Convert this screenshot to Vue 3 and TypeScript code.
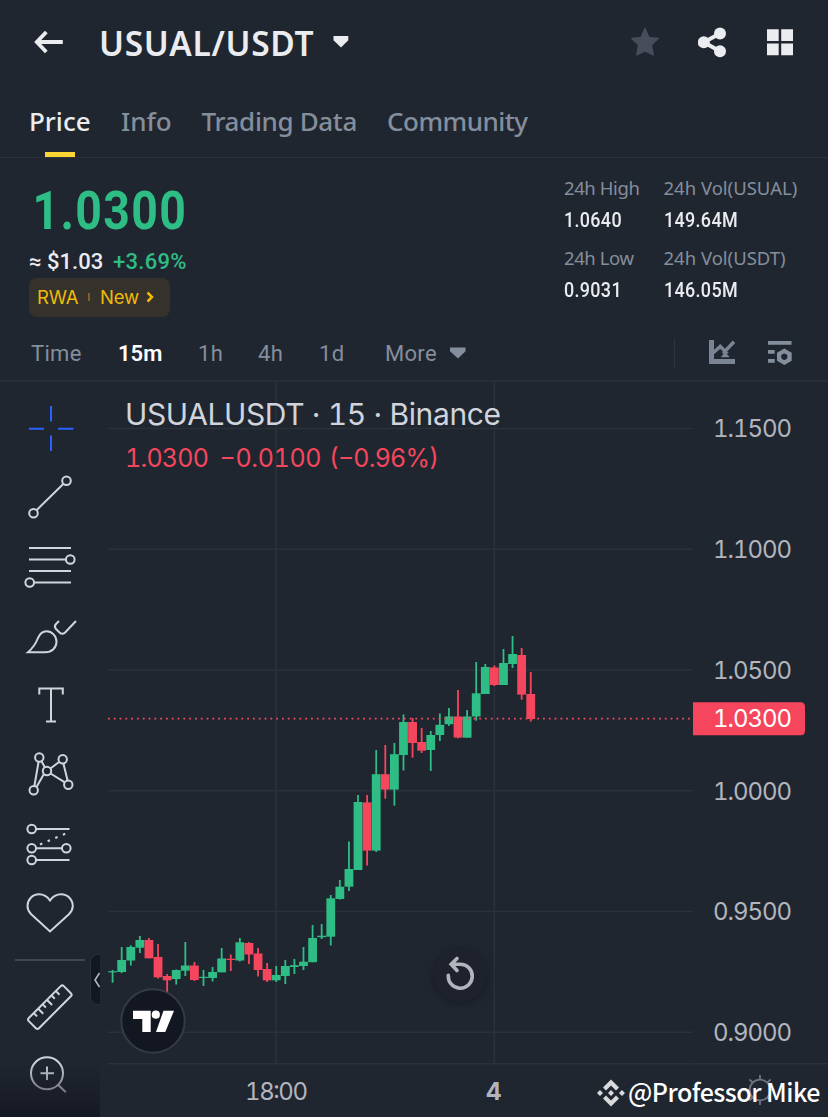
<script setup lang="ts">
interface Tick { y: number; label: string }
type Candle = [number, number, number, number, 'up' | 'down']

const tabs = ['Price', 'Info', 'Trading Data', 'Community']
const intervals = ['Time', '15m', '1h', '4h', '1d', 'More']
const stats = [
  { label: '24h High', value: '1.0640' },
  { label: '24h Vol(USUAL)', value: '149.64M' },
  { label: '24h Low', value: '0.9031' },
  { label: '24h Vol(USDT)', value: '146.05M' },
]
const ticks: Tick[] = [
  { y: 428.5, label: '1.1500' },
  { y: 549.3, label: '1.1000' },
  { y: 670, label: '1.0500' },
  { y: 790.8, label: '1.0000' },
  { y: 911.5, label: '0.9500' },
  { y: 1032.3, label: '0.9000' },
]
// high, body top, body bottom, low
const candles: Candle[] = [
  [970, 971.2, 972.4, 982.7, 'up'], [947, 960, 972, 973, 'up'], [945.3, 947, 960.5, 965.5, 'up'],
  [936, 940, 947.7, 953, 'up'], [938, 940, 958.3, 958.3, 'down'], [944, 957, 977.3, 978.5, 'down'],
  [974, 976, 980.3, 993.5, 'down'], [969.5, 970, 979, 984.5, 'up'], [942, 965.5, 970.7, 976, 'up'],
  [962, 965.5, 980, 981, 'down'], [970, 976.8, 978, 986, 'up'], [967, 972, 978, 981.5, 'up'],
  [948, 958.5, 972.3, 972.3, 'up'], [954.5, 958.8, 960, 971, 'down'], [938, 942.3, 960.5, 961.5, 'up'],
  [942, 943, 954.5, 964, 'down'], [948, 953.5, 970, 976.5, 'down'], [963, 969, 980.3, 982, 'down'],
  [966, 975, 980.3, 982, 'up'], [960, 966, 976, 984, 'up'], [959, 965.2, 967, 974, 'up'],
  [947, 961.7, 966, 970, 'up'], [925, 938, 962.2, 962.2, 'up'], [924, 935.7, 937.2, 939, 'up'],
  [895, 898.3, 936.7, 945.5, 'up'], [880, 886.7, 899, 899.5, 'up'], [841.5, 869, 886.7, 891, 'up'],
  [795, 802, 870, 870, 'up'], [795, 802.4, 850.6, 865.5, 'down'], [750, 774.2, 850.6, 852, 'up'],
  [745, 774.2, 789.6, 798.7, 'down'], [743, 754.2, 789.6, 805.7, 'up'], [714.5, 722, 755, 770.5, 'up'],
  [718, 722, 743, 757.7, 'down'], [728, 742, 750.7, 753, 'down'], [731, 735, 750, 771, 'up'],
  [713.5, 724.8, 735, 741, 'up'], [708, 716.5, 724.2, 726, 'up'], [690, 716.5, 737.6, 738.3, 'down'],
  [710, 716.5, 737.7, 737.7, 'up'], [662, 693.3, 716.5, 720.7, 'up'], [664, 667, 694, 694, 'up'],
  [665.5, 667.5, 685, 686, 'down'], [649, 663, 685, 685, 'up'], [636, 654, 664, 668, 'up'],
  [648, 655, 694.6, 699.7, 'down'], [672, 694, 719, 721.5, 'down'],
]
const cx = (i: number): number => 112.6 + i * 9.09
</script>

<template>
  <div class="screen">
    <header class="topbar">
      <svg class="back" viewBox="0 0 32 30" width="32" height="30"><path d="M29.800 15H5M13.300 5 3.800 15l9.500 10" /></svg>
      <h1>USUAL/USDT</h1>
      <svg class="caret" viewBox="0 0 16 12" width="16" height="12"><path d="M.5 0h14.800v4.200L8 11.400.5 4.200Z" /></svg>
      <div class="actions">
        <svg width="30" height="32" viewBox="0 0 30 32"><path class="star" d="m15 2.500 3.900 9 9.300 1-6.900 6.500 1.900 9.800-8.200-4-8.200 4 1.900-9.800L1.800 12.500l9.300-1Z" /></svg>
        <svg width="30" height="32" viewBox="0 0 30 32"><g fill="#eaecef"><circle cx="22" cy="7.500" r="6" /><circle cx="5.800" cy="16.300" r="6" /><circle cx="22" cy="25.300" r="6" /></g><path d="M22 7.500 5.800 16.300 22 25.300" fill="none" stroke="#eaecef" stroke-width="4" /></svg>
        <svg width="28" height="32" viewBox="0 0 28 32"><path fill="#eaecef" d="M1 3.300h11.700V15H1ZM15.200 3.300H27V15H15.200ZM1 17.600h11.700v11.600H1ZM15.200 17.600H27v11.600H15.200Z" /></svg>
      </div>
    </header>

    <nav class="tabs">
      <span v-for="(t, i) in tabs" :key="t" :class="['tab', 't' + i, { active: i === 0 }]">{{ t }}</span>
    </nav>

    <section class="summary">
      <div class="quote">
        <div class="price">1.0300</div>
        <div class="fiat"><span class="approx">≈ $1.03</span><span class="change">+3.69%</span></div>
        <div class="badge">
          <span class="rwa">RWA</span><i></i><span class="new">New</span>
          <svg width="8" height="12" viewBox="0 0 8 12"><path d="M1.500 1.500 6 6l-4.500 4.500" /></svg>
        </div>
      </div>
      <dl class="stats">
        <div v-for="(s, i) in stats" :key="s.label" :class="'s' + i">
          <dt>{{ s.label }}</dt>
          <dd>{{ s.value }}</dd>
        </div>
      </dl>
    </section>

    <nav class="intervals">
      <span v-for="(t, i) in intervals" :key="t" :class="['i' + i, { active: i === 1 }]">{{ t }}</span>
      <svg class="more" width="16" height="12" viewBox="0 0 16 12"><path d="M0 .5h15.500v3.700L8 11.500 0 4.200Z" /></svg>
      <div class="tools">
        <svg width="28" height="28" viewBox="0 0 28 28"><path d="M3.500 1v21.500H27" fill="none" stroke="#7b8493" stroke-width="5" /><path d="m5 14 7.300-6.500 4.700 4.800 9-9.500" fill="none" stroke="#7b8493" stroke-width="3.500" /><path fill="#7b8493" d="m17.200 10.500-3.500 3.400 2 .8-3 3.500h9l-3-3.500 2-.8Z" /></svg>
        <svg width="28" height="28" viewBox="0 0 28 28"><path fill="#848e9c" d="M2 2h23.500v3.700H2ZM2 11h6.700v3.700H2ZM2 20h6.700v3.700H2Z" /><path fill="#848e9c" fill-rule="evenodd" d="m18.300 9.500 7.400 4.200v8l-7.400 4.200-7.300-4.200v-8ZM18.300 14.500a3.200 3.200 0 1 0 .01 0Z" /></svg>
      </div>
    </nav>

    <main class="workspace">
      <aside class="toolbar">
        <svg class="icon"><path class="blue" d="M51 12v15.500M51 41.500V57M29 34.700h15M58 34.700h15.500" /></svg>
        <svg class="icon"><circle cx="66.500" cy="17.700" r="4.300" /><circle cx="33.500" cy="50.200" r="4.300" /><path d="M63.500 20.700 36.500 47.200" /></svg>
        <svg class="icon"><path d="M29 16h42M29 27.500h37M29 39h42M34 50.500h37" /><circle cx="70.300" cy="27.500" r="4.300" /><circle cx="29.700" cy="50.500" r="4.300" /></svg>
        <svg class="icon"><path d="M28 51.200C33 47 36 42 38 37c2-4.500 5-6.700 8.500-6.700 5.500 0 10 4.700 10 10.500 0 6-4.500 10.400-11.500 10.400ZM59 20l-3 3q-2.300 2.500 0 5l3.500 3.500q2.800 2.600 5.600 0L76 20" /></svg>
        <svg class="icon"><path d="M39.300 24.500v-6h23.500v6M51 18.500v33M46 51.500h10" /></svg>
        <svg class="icon"><path d="m38.600 22.700-4.200 24.300M41.500 22.100l3.300 6.200M43.800 35.200 36.500 48M50.500 29.500 59 23M50.500 34.500l14 8.700M63.400 24.600 67.600 41.400" /><circle cx="39.300" cy="18.500" r="4.200" /><circle cx="62.700" cy="20.300" r="4.200" /><circle cx="47" cy="32" r="4.200" /><circle cx="33.700" cy="51.300" r="4.200" /><circle cx="68.300" cy="45.700" r="4.200" /></svg>
        <svg class="icon"><path d="M36 21h33.500M36 40.300h26M36 52h33.500" /><path d="m40 36.500 27-11.500" stroke-dasharray="2.500 5.800" /><circle cx="31.700" cy="21" r="4.300" /><circle cx="31.700" cy="40.300" r="4.300" /><circle cx="66.300" cy="40.300" r="4.300" /><circle cx="31.700" cy="52" r="4.300" /></svg>
        <svg class="icon"><path d="M50 23.500C47 19 43 17.300 39 17.300c-6.500 0-11.500 5.200-11.500 11.700 0 3.300 1.500 6 3.700 8.200L50 54.500l18.900-17.300c2.200-2.200 3.900-4.900 3.900-8.200 0-6.500-5.200-11.700-11.700-11.700-4 0-8.100 1.700-11.100 6.200Z" /></svg>
        <div class="rule"></div>
        <svg class="icon"><g transform="translate(49.800 34.200) rotate(-45)"><rect x="-24.700" y="-7.200" width="49.500" height="14.400" rx="2.200" /><path d="M-15.500-7v4.500M-9.300-7v7M-3-7v4.500M3.200-7v7M9.500-7v4.500M15.700-7v5" /></g></svg>
        <svg class="icon"><circle cx="47" cy="31.300" r="16" /><path d="M40.500 31.300h13.500M47 24.500v13.500M58.300 43l7.500 7.300" /></svg>
        <div class="fade"></div>
        <div class="handle"><svg width="8" height="16" viewBox="0 0 8 16"><path d="M6.500 1 2 8l4.500 7" /></svg></div>
      </aside>

      <svg class="chart" viewBox="100 381 728 736" width="728" height="736">
        <g stroke="#2b313b" stroke-width="1.600">
          <path v-for="t in ticks" :key="t.label" :d="`M108 ${t.y}H693`" />
          <path d="M276.200 381V1064M494.400 381V1064M108 1063.800H693.500M695 1063.800H828" />
        </g>
        <g v-for="(c, i) in candles" :key="i" :class="c[4]">
          <rect :x="cx(i) - 0.9" :y="c[0]" width="1.800" :height="c[3] - c[0]" />
          <rect :x="cx(i) - 4.4" :y="c[1]" width="8.800" :height="c[2] - c[1]" />
        </g>
        <path d="M108 718.600H693" stroke="#f6465d" stroke-width="1.800" stroke-dasharray="1.800 4" />
        <g class="axis">
          <text v-for="t in ticks" :key="t.label" x="713" :y="t.y + 8.700" textLength="79">{{ t.label }}</text>
          <text x="245" y="1100" textLength="63">18:00</text>
          <text class="day" x="486" y="1100">4</text>
        </g>
        <path d="M693 702.200h107.500q4.500 0 4.500 4.500v24q0 4.500-4.500 4.500H693Z" fill="#f6465d" />
        <text class="last" x="713" y="727.300" textLength="79">1.0300</text>
        <text class="pair" x="125" y="425" textLength="376">USUALUSDT · 15 · Binance</text>
        <g class="delta">
          <text x="125" y="466.500" textLength="84">1.0300</text>
          <text x="219.500" y="466.500" textLength="102">−0.0100</text>
          <text x="329" y="466.500" textLength="110">(−0.96%)</text>
        </g>
        <circle cx="153" cy="1021" r="31.700" fill="#131722" stroke="#363a45" stroke-width="2" />
        <g fill="#fff">
          <path d="M133 1010.700h17.700V1032h-8.400v-13H133ZM163.500 1010.700H174L165.300 1032H156Z" />
          <circle cx="155.800" cy="1014.700" r="4.100" />
        </g>
        <circle class="reset" cx="460.300" cy="974.300" r="27" />
        <path d="M448.300 975.300a12 12 0 1 0 12-11.100H452M457 958.500l-5.800 5.700 5.800 6.300" fill="none" stroke="#b2b5be" stroke-width="3.600" stroke-linecap="round" />
        <g fill="none" stroke="#6f7480" stroke-width="1.800">
          <circle cx="760" cy="1090" r="10.300" />
          <path d="M760 1075v4.500M760 1100.500v4.500M770.500 1079.500l-3 3M749.500 1079.500l3 3M770.500 1100.500l-3-3M749.500 1100.500l3-3M745.500 1090h4M770.500 1090h4" />
        </g>
        <g transform="translate(611 1093)" fill="#d9dadc">
          <path d="M0-13.500 8-5.500 5-2.500 0-7.500-5-2.500-8-5.500ZM0 13.500 8 5.500 5 2.500 0 7.500-5 2.500-8 5.500ZM0-3 3 0 0 3-3 0ZM-11-3-8 0-11 3-14 0ZM11-3 14 0 11 3 8 0Z" />
        </g>
        <text class="credit" x="628" y="1102" textLength="192.500">@Professor Mike</text>
      </svg>
    </main>
  </div>
</template>

<style>
html, body { margin: 0; background: #202630; }
</style>

<style scoped>
.screen { width: 828px; height: 1117px; overflow: hidden; background: #202630; color: #eaecef; font-family: "Noto Sans", sans-serif; box-sizing: border-box; }
.topbar { height: 87px; display: flex; align-items: center; padding: 0 34px 0 33px; box-sizing: border-box; }
.back { margin-top: -3px; fill: none; stroke: #eaecef; stroke-width: 3.800; }
h1 { margin: -2px 0 0 34px; width: 215px; font-size: 33.500px; font-weight: 600; line-height: 44px; letter-spacing: .7px; white-space: nowrap; }
.caret { margin: -4px 0 0 19px; fill: #eaecef; }
.actions { display: flex; gap: 38px; margin: -4px 0 0 auto; }
.star { fill: #474d5b; stroke: #474d5b; stroke-width: 1.500; stroke-linejoin: round; }
.tabs { height: 71px; box-sizing: border-box; border-bottom: 1.500px solid #2c323c; display: grid; grid-template-columns: 92px 80.500px 185.500px auto; padding: 0 0 0 29px; font-size: 26px; font-weight: 500; line-height: 69px; color: #848e9c; white-space: nowrap; }
.tab.active { color: #eaecef; background: linear-gradient(#fcd535, #fcd535) 16px 65px / 30px 5px no-repeat; }
.t2 { letter-spacing: -.350px; }
.t3 { letter-spacing: -.500px; }
.summary { height: 168px; display: flex; justify-content: space-between; box-sizing: border-box; padding: 19px 0 0 29px; white-space: nowrap; }
.price { width: 200px; height: 66px; font: 700 54px/67px Roboto, sans-serif; color: #2ebd85; letter-spacing: 1.600px; padding-left: 4px; transform: scaleX(.86); transform-origin: 0 0; }
.fiat { height: 35px; display: flex; gap: 10px; font: 500 22px/38px Roboto, sans-serif; }
.approx { width: 74px; }
.change { color: #2ebd85; letter-spacing: .300px; }
.badge { display: flex; align-items: center; width: 140.500px; height: 38.500px; border-radius: 8px; background: #34322b; color: #f0b90b; font: 400 18.500px/38px Inter, sans-serif; box-sizing: border-box; padding-left: 8px; }
.rwa { width: 51px; letter-spacing: -.200px; }
.badge i { width: 1.500px; height: 8px; background: #7a6220; margin-right: 10.500px; }
.new { width: 46px; letter-spacing: -.200px; }
.badge svg { fill: none; stroke: #f0b90b; stroke-width: 2.500; }
.stats { margin: 0; width: 264px; display: grid; grid-template-columns: 99.500px auto; grid-auto-rows: 69.500px; }
.stats dt { font-size: 18.500px; line-height: 22px; color: #848e9c; }
.s0 dt, .s2 dt { letter-spacing: -.400px; }
.stats dd { margin: 8px 0 0; font: 500 19.500px/27px Roboto, sans-serif; letter-spacing: .350px; transform: scaleX(.92); transform-origin: 0 0; }
.intervals { height: 56px; box-sizing: border-box; border-bottom: 2px solid #272d37; display: flex; align-items: center; padding-left: 31px; font: 400 22px/52px Roboto, sans-serif; color: #848e9c; letter-spacing: .300px; }
.intervals span { padding-top: 1px; }
.intervals .active { color: #fff; font-weight: 600; letter-spacing: 0; }
.i0 { width: 87px; } .i1 { width: 80px; } .i2 { width: 60px; } .i3 { width: 61px; } .i4 { width: 66px; } .i5 { width: 65px; }
.more { fill: #848e9c; }
.tools { display: flex; align-items: center; gap: 30px; height: 31px; border-left: 1px solid #2f3540; margin-left: auto; padding: 0 34px 0 33px; }
.workspace { display: flex; height: 736px; margin-top: -1px; }
.toolbar { position: relative; width: 100px; height: 736px; box-sizing: border-box; padding-top: 13px; display: flex; flex-direction: column; overflow: hidden; }
.icon { display: block; flex: none; width: 100px; height: 69px; fill: none; stroke: #d1d4dc; stroke-width: 2; }
.blue { stroke: #2962ff; }
.rule { flex: none; width: 70px; height: 2px; margin: 13px 0 12px 15px; background: #434651; }
.fade { position: absolute; left: 0; bottom: 0; width: 100px; height: 56px; background: linear-gradient(#13172200, #131722dd); }
.handle { position: absolute; left: 90px; top: 573px; width: 20px; height: 51px; border: 1.500px solid #2a2e39; border-radius: 8px; background: #131722; box-sizing: border-box; display: flex; align-items: center; padding-left: 2px; }
.handle svg { flex: none; fill: none; stroke: #b2b5be; stroke-width: 1.600; }
.chart { display: block; font-family: Inter, sans-serif; font-variant-numeric: tabular-nums; }
.up { fill: #2ebd85; } .down { fill: #f6465d; }
.axis { fill: #b2b5be; font-size: 24px; }
.day { font-weight: 700; }
.last { fill: #fff; font-size: 24px; }
.pair { fill: #d1d4dc; font-size: 30px; }
.delta { fill: #f6465d; font-size: 25px; }
.reset { fill: #1e222d; filter: drop-shadow(0 3px 4px #131722aa); }
.credit { fill: #fff; font: 500 25px "Noto Sans CJK SC", sans-serif; }
</style>
